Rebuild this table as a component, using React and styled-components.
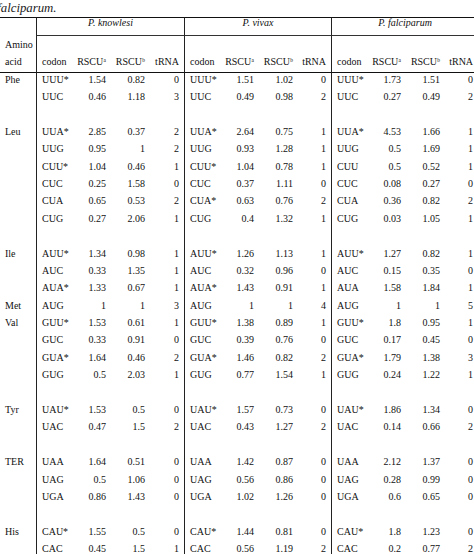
import React from "react";
import styled, { createGlobalStyle } from "styled-components";

const Global = createGlobalStyle`
  html, body { margin: 0; padding: 0; background: #fff; }
  body { width: 474px; height: 554px; overflow: hidden; }
`;

const Page = styled.div`
  font-family: "Liberation Serif", "Times New Roman", serif;
  color: #111;
  width: 474px;
  overflow: hidden;
`;

const Title = styled.div`
  font-style: italic;
  font-size: 12.8px;
  line-height: 17px;
  height: 17px;
  margin-left: -2.8px;
  white-space: nowrap;
  color: #222;
`;

const Table = styled.table`
  border-collapse: separate;
  border-spacing: 0;
  table-layout: fixed;
  width: 477px;
  font-size: 10px;
`;

const AminoHead = styled.th`
  font-weight: normal;
  text-align: left;
  vertical-align: bottom;
  padding: 0 0 1.6px 5px;
  line-height: 17px;
  border-top: 1px solid #111;
  border-bottom: 1px solid #111;
`;

const SpeciesCell = styled.th`
  font-weight: normal;
  font-style: italic;
  text-align: center;
  padding: 0 0 6.35px 0;
  line-height: 10.65px;
  border-top: 1px solid #111;
  border-bottom: 1px solid #333;
  border-left: 1px solid #222;
`;

const ColHead = styled.th`
  font-weight: normal;
  vertical-align: bottom;
  line-height: 17px;
  height: 34px;
  padding: 0 ${(p) => p.$pr || 0}px 1.6px ${(p) => p.$pl || 0}px;
  text-align: ${(p) => (p.$left ? "left" : "right")};
  border-bottom: 1px solid #111;
  border-left: ${(p) => (p.$divider ? "1px solid #222" : "none")};
  white-space: nowrap;
`;

const Sup = styled.sup`
  font-size: 5.5px;
  vertical-align: 3.5px;
  line-height: 0;
  margin-left: 0.3px;
`;

const Cell = styled.td`
  line-height: 13.25px;
  padding: 0 ${(p) => p.$pr || 0}px 4.15px ${(p) => p.$pl || 0}px;
  text-align: ${(p) => (p.$left ? "left" : "right")};
  vertical-align: top;
  white-space: nowrap;
  border-left: ${(p) => (p.$divider ? "1px solid #222" : "none")};
`;

const rows = [
  ["Phe", ["UUU*", "1.54", "0.82", "0"], ["UUU*", "1.51", "1.02", "0"], ["UUU*", "1.73", "1.51", "0"]],
  ["", ["UUC", "0.46", "1.18", "3"], ["UUC", "0.49", "0.98", "2"], ["UUC", "0.27", "0.49", "2"]],
  null,
  ["Leu", ["UUA*", "2.85", "0.37", "2"], ["UUA*", "2.64", "0.75", "1"], ["UUA*", "4.53", "1.66", "1"]],
  ["", ["UUG", "0.95", "1", "2"], ["UUG", "0.93", "1.28", "1"], ["UUG", "0.5", "1.69", "1"]],
  ["", ["CUU*", "1.04", "0.46", "1"], ["CUU*", "1.04", "0.78", "1"], ["CUU", "0.5", "0.52", "1"]],
  ["", ["CUC", "0.25", "1.58", "0"], ["CUC", "0.37", "1.11", "0"], ["CUC", "0.08", "0.27", "0"]],
  ["", ["CUA", "0.65", "0.53", "2"], ["CUA*", "0.63", "0.76", "2"], ["CUA", "0.36", "0.82", "2"]],
  ["", ["CUG", "0.27", "2.06", "1"], ["CUG", "0.4", "1.32", "1"], ["CUG", "0.03", "1.05", "1"]],
  null,
  ["Ile", ["AUU*", "1.34", "0.98", "1"], ["AUU*", "1.26", "1.13", "1"], ["AUU*", "1.27", "0.82", "1"]],
  ["", ["AUC", "0.33", "1.35", "1"], ["AUC", "0.32", "0.96", "0"], ["AUC", "0.15", "0.35", "0"]],
  ["", ["AUA*", "1.33", "0.67", "1"], ["AUA*", "1.43", "0.91", "1"], ["AUA", "1.58", "1.84", "1"]],
  ["Met", ["AUG", "1", "1", "3"], ["AUG", "1", "1", "4"], ["AUG", "1", "1", "5"]],
  ["Val", ["GUU*", "1.53", "0.61", "1"], ["GUU*", "1.38", "0.89", "1"], ["GUU*", "1.8", "0.95", "1"]],
  ["", ["GUC", "0.33", "0.91", "0"], ["GUC", "0.39", "0.76", "0"], ["GUC", "0.17", "0.45", "0"]],
  ["", ["GUA*", "1.64", "0.46", "2"], ["GUA*", "1.46", "0.82", "2"], ["GUA*", "1.79", "1.38", "3"]],
  ["", ["GUG", "0.5", "2.03", "1"], ["GUG", "0.77", "1.54", "1"], ["GUG", "0.24", "1.22", "1"]],
  null,
  ["Tyr", ["UAU*", "1.53", "0.5", "0"], ["UAU*", "1.57", "0.73", "0"], ["UAU*", "1.86", "1.34", "0"]],
  ["", ["UAC", "0.47", "1.5", "2"], ["UAC", "0.43", "1.27", "2"], ["UAC", "0.14", "0.66", "2"]],
  null,
  ["TER", ["UAA", "1.64", "0.51", "0"], ["UAA", "1.42", "0.87", "0"], ["UAA", "2.12", "1.37", "0"]],
  ["", ["UAG", "0.5", "1.06", "0"], ["UAG", "0.56", "0.86", "0"], ["UAG", "0.28", "0.99", "0"]],
  ["", ["UGA", "0.86", "1.43", "0"], ["UGA", "1.02", "1.26", "0"], ["UGA", "0.6", "0.65", "0"]],
  null,
  ["His", ["CAU*", "1.55", "0.5", "0"], ["CAU*", "1.44", "0.81", "0"], ["CAU*", "1.8", "1.23", "0"]],
  ["", ["CAC", "0.45", "1.5", "1"], ["CAC", "0.56", "1.19", "2"], ["CAC", "0.2", "0.77", "2"]],
];

const species = ["P. knowlesi", "P. vivax", "P. falciparum"];
const groupWidths = [
  [40, 31, 39, 38],
  [40, 31, 39, 37],
  [40, 31, 39, 37],
];

function GroupCells({ vals }) {
  const v = vals || ["", "", "", ""];
  return (
    <>
      <Cell $left $divider $pl={5}>{v[0] || "\u00a0"}</Cell>
      <Cell $pr={1}>{v[1]}</Cell>
      <Cell $pr={1}>{v[2]}</Cell>
      <Cell $pr={5}>{v[3]}</Cell>
    </>
  );
}

export default function App() {
  return (
    <Page>
      <Global />
      <Title>falciparum.</Title>
      <Table>
        <colgroup>
          <col style={{ width: 36 }} />
          {groupWidths.flat().map((w, i) => (
            <col key={i} style={{ width: w }} />
          ))}
        </colgroup>
        <thead>
          <tr>
            <AminoHead rowSpan={2}>
              Amino
              <br />
              acid
            </AminoHead>
            {species.map((s) => (
              <SpeciesCell key={s} colSpan={4}>
                {s}
              </SpeciesCell>
            ))}
          </tr>
          <tr>
            {species.map((s) => (
              <React.Fragment key={s}>
                <ColHead $left $divider $pl={5}>codon</ColHead>
                <ColHead $pr={1}>
                  RSCU<Sup>a</Sup>
                </ColHead>
                <ColHead $pr={1}>
                  RSCU<Sup>b</Sup>
                </ColHead>
                <ColHead $pr={5}>tRNA</ColHead>
              </React.Fragment>
            ))}
          </tr>
        </thead>
        <tbody>
          {rows.map((r, i) => (
            <tr key={i}>
              <Cell $left $pl={5}>{r ? r[0] : ""}</Cell>
              <GroupCells vals={r && r[1]} />
              <GroupCells vals={r && r[2]} />
              <GroupCells vals={r && r[3]} />
            </tr>
          ))}
        </tbody>
      </Table>
    </Page>
  );
}
